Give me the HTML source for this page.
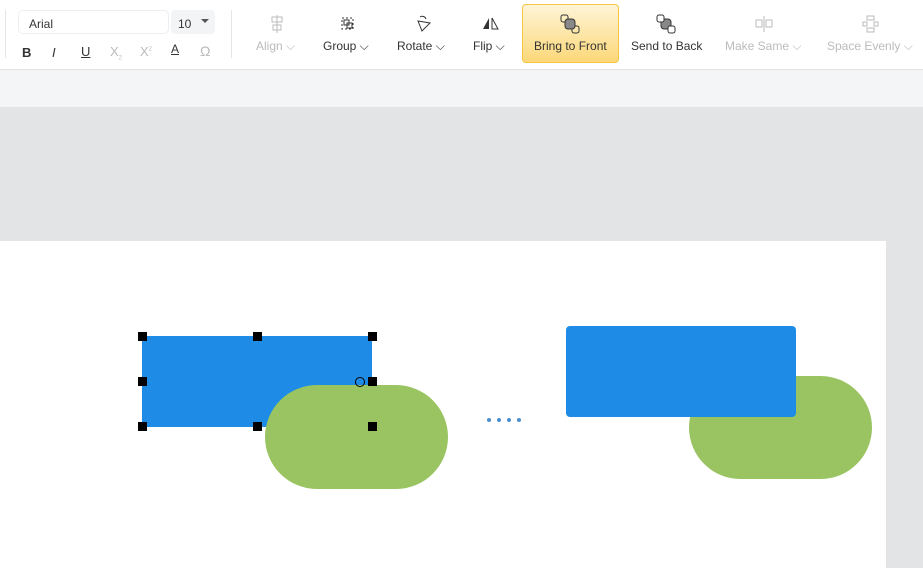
<!DOCTYPE html>
<html><head><style>
body{margin:0;width:923px;height:568px;overflow:hidden;background:#e3e4e6;font-family:"Liberation Sans",sans-serif;position:relative}
.tb{position:absolute;left:0;top:0;width:923px;height:69px;background:#fff;border-bottom:1px solid #e2e3e5}
.band{position:absolute;left:0;top:70px;width:923px;height:37px;background:#f4f5f7}
.page{position:absolute;left:0;top:241px;width:886px;height:327px;background:#fff}
.a{position:absolute}
.lbl{position:absolute;font-size:12px;color:#333;white-space:nowrap}
.dis{color:#bbb}
.h{position:absolute;width:9px;height:9px;background:#000}
</style></head><body>
<div class="tb">
 <div class="a" style="left:18px;top:10px;width:151px;height:24px;border:1px solid #eceef0;border-radius:5px;box-sizing:border-box"></div>
 <div class="lbl" style="left:29px;top:17px;font-size:12px">Arial</div>
 <div class="a" style="left:171px;top:10px;width:44px;height:24px;background:#f3f4f6;border-radius:4px"></div>
 <div class="lbl" style="left:178px;top:17px">10</div>
 <div class="a" style="left:201px;top:19px;border-left:4px solid transparent;border-right:4px solid transparent;border-top:4px solid #555"></div>
 <div class="lbl" style="left:22px;top:45px;font-weight:bold;font-size:13px">B</div>
 <div class="lbl" style="left:52px;top:45px;font-style:italic;font-size:13px;text-decoration:underline;text-decoration-color:transparent">I</div>
 <div class="lbl" style="left:81px;top:44px;text-decoration:underline;font-size:13px">U</div>
 <div class="lbl dis" style="left:110px;top:44px;font-size:13px">X<sub style="font-size:6px">2</sub></div>
 <div class="lbl dis" style="left:140px;top:44px;font-size:13px">X<sup style="font-size:6px">2</sup></div>
 <div class="lbl" style="left:171px;top:42px;font-size:12px;text-decoration:underline">A</div>
 <div class="lbl dis" style="left:200px;top:43px;font-size:14px">Ω</div>
 <div class="a" style="left:231px;top:10px;width:1px;height:48px;background:#e5e5e5"></div>
 <div class="a" style="left:5px;top:10px;width:1px;height:48px;background:#e5e5e5"></div>
 <svg class="a" style="left:268px;top:15px" width="18" height="18" fill="none" stroke="#bbb"><rect x="4" y="2" width="10" height="5"/><rect x="5" y="10" width="8" height="5"/><path d="M9 0v18"/></svg>
 <div class="lbl dis" style="left:256px;top:39px">Align ⌵</div>
 <svg class="a" style="left:339px;top:15px" width="18" height="18" fill="none" stroke="#333"><rect x="3" y="3" width="11" height="11" stroke-dasharray="2 2"/><rect x="5" y="5" width="5" height="5"/><rect x="8" y="8" width="5" height="5"/></svg>
 <div class="lbl" style="left:323px;top:39px">Group ⌵</div>
 <svg class="a" style="left:415px;top:15px" width="18" height="18" fill="none" stroke="#333"><path d="M3 6l12 2-8 8z M5 2a4 4 0 0 1 6 2"/></svg>
 <div class="lbl" style="left:397px;top:39px">Rotate ⌵</div>
 <svg class="a" style="left:482px;top:15px" width="18" height="18"><path d="M1 14L7 3v11z" fill="#333"/><path d="M10 3v11h6z" fill="none" stroke="#333"/></svg>
 <div class="lbl" style="left:473px;top:39px">Flip ⌵</div>
 <div class="a" style="left:522px;top:4px;width:97px;height:59px;border:1px solid #f5c544;border-radius:4px;box-sizing:border-box;background:linear-gradient(#fff4d6,#fbd879)"></div>
 <svg class="a" style="left:560px;top:14px" width="20" height="20" fill="none" stroke="#333"><rect x="1" y="1" width="7" height="7" rx="2"/><rect x="12" y="12" width="7" height="7" rx="2"/><rect x="5" y="5" width="10" height="10" rx="3" fill="#888"/></svg>
 <div class="lbl" style="left:534px;top:39px">Bring to Front</div>
 <svg class="a" style="left:656px;top:14px" width="20" height="20" fill="none" stroke="#333"><rect x="5" y="5" width="10" height="10" rx="3" fill="#888"/><rect x="1" y="1" width="7" height="7" rx="2" fill="#fff"/><rect x="12" y="12" width="7" height="7" rx="2" fill="#fff"/></svg>
 <div class="lbl" style="left:631px;top:39px">Send to Back</div>
 <svg class="a" style="left:755px;top:15px" width="18" height="18" fill="none" stroke="#bbb"><rect x="1" y="5" width="6" height="7"/><rect x="11" y="5" width="6" height="7"/><path d="M9 1v16"/></svg>
 <div class="lbl dis" style="left:725px;top:39px">Make Same ⌵</div>
 <svg class="a" style="left:862px;top:15px" width="18" height="18" fill="none" stroke="#bbb"><rect x="5" y="1" width="7" height="4"/><rect x="5" y="13" width="7" height="4"/><rect x="1" y="7" width="4" height="4"/><rect x="12" y="7" width="4" height="4"/></svg>
 <div class="lbl dis" style="left:827px;top:39px">Space Evenly ⌵</div>
</div>
<div class="band"></div>
<div class="page"></div>
<div class="a" style="left:142px;top:336px;width:230px;height:91px;background:#1e8ce6"></div>
<div class="a" style="left:265px;top:385px;width:183px;height:104px;background:#9ac461;border-radius:52px"></div>
<div class="h" style="left:138px;top:332px"></div><div class="h" style="left:253px;top:332px"></div><div class="h" style="left:368px;top:332px"></div>
<div class="h" style="left:138px;top:377px"></div><div class="h" style="left:368px;top:377px"></div>
<div class="h" style="left:138px;top:422px"></div><div class="h" style="left:253px;top:422px"></div><div class="h" style="left:368px;top:422px"></div>
<div class="a" style="left:355px;top:377px;width:8px;height:8px;border:1.5px solid #000;border-radius:50%"></div>
<svg class="a" style="left:485px;top:416px" width="40" height="8"><g fill="#4a8fd0"><circle cx="4" cy="4" r="2"/><circle cx="14" cy="4" r="2"/><circle cx="24" cy="4" r="2"/><circle cx="34" cy="4" r="2"/></g></svg>
<div class="a" style="left:689px;top:376px;width:183px;height:103px;background:#9ac461;border-radius:52px"></div>
<div class="a" style="left:566px;top:326px;width:230px;height:91px;background:#1e8ce6;border-radius:4px"></div>
</body></html>
